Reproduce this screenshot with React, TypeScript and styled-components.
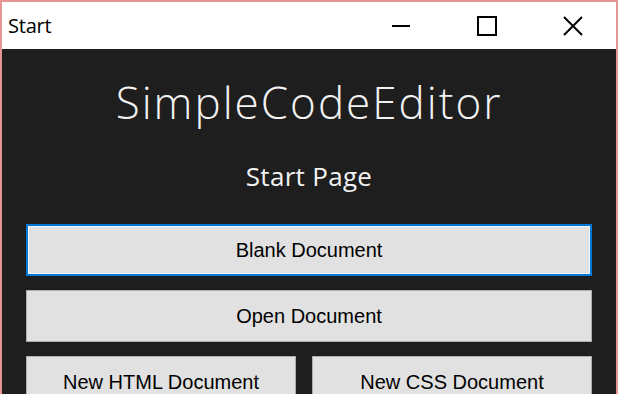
import styled, { createGlobalStyle, css } from "styled-components";

const GlobalStyle = createGlobalStyle`
  html, body {
    margin: 0;
    padding: 0;
    background: #1e1e1e;
  }
`;

const App = () => {
  return (
    <>
      <GlobalStyle />
      <Window>
        <TitleBar>
          <Caption>Start</Caption>
          <Controls>
            <CaptionButton aria-label="Minimize">
              <svg width="22" height="22" viewBox="0 0 22 22">
                <line x1="2" y1="11" x2="20" y2="11" stroke="#000" strokeWidth="2" />
              </svg>
            </CaptionButton>
            <CaptionButton aria-label="Maximize">
              <svg width="22" height="22" viewBox="0 0 22 22">
                <rect x="2" y="2" width="18" height="18" fill="none" stroke="#000" strokeWidth="2" />
              </svg>
            </CaptionButton>
            <CaptionButton aria-label="Close">
              <svg width="22" height="22" viewBox="0 0 22 22">
                <path d="M2 2 L20 20 M20 2 L2 20" stroke="#000" strokeWidth="2" />
              </svg>
            </CaptionButton>
          </Controls>
        </TitleBar>
        <Content>
          <AppName>SimpleCodeEditor</AppName>
          <Subtitle>Start Page</Subtitle>
          <ButtonStack>
            <ActionButton $focused>Blank Document</ActionButton>
            <ActionButton>Open Document</ActionButton>
            <ButtonRow>
              <ActionButton>New HTML Document</ActionButton>
              <ActionButton>New CSS Document</ActionButton>
            </ButtonRow>
          </ButtonStack>
        </Content>
      </Window>
    </>
  );
};

export default App;

const Window = styled.div`
  height: 100vh;
  box-sizing: border-box;
  border: 2px solid #e79494;
  border-bottom: none;
  display: flex;
  flex-direction: column;
  overflow: hidden;
`;

const TitleBar = styled.div`
  height: 47px;
  flex-shrink: 0;
  background: #ffffff;
  display: flex;
  align-items: center;
  justify-content: space-between;
`;

const Caption = styled.div`
  padding-left: 6px;
  font-family: "Open Sans", "Noto Sans", sans-serif;
  font-size: 20px;
  color: #000;
  letter-spacing: -0.2px;
`;

const Controls = styled.div`
  display: flex;
  height: 100%;
`;

const CaptionButton = styled.button`
  width: 86px;
  height: 100%;
  border: none;
  background: transparent;
  padding: 0;
  display: flex;
  align-items: center;
  justify-content: center;
`;

const Content = styled.div`
  flex: 1;
  background: #1e1e1e;
  padding: 28px 24px 0;
  display: flex;
  flex-direction: column;
  align-items: center;
`;

const AppName = styled.h1`
  margin: 0;
  font-family: "Open Sans", "Noto Sans", sans-serif;
  font-weight: 300;
  font-size: 44px;
  line-height: 50px;
  letter-spacing: 2px;
  color: #f2f2f2;
`;

const Subtitle = styled.h2`
  margin: 34px 0 0;
  font-family: "Open Sans", "Noto Sans", sans-serif;
  font-weight: 400;
  font-size: 26px;
  line-height: 30px;
  letter-spacing: 0.3px;
  color: #f2f2f2;
`;

const ButtonStack = styled.div`
  margin-top: 33px;
  width: 100%;
  display: flex;
  flex-direction: column;
  gap: 14px;
`;

const ButtonRow = styled.div`
  display: grid;
  grid-template-columns: 270px 1fr;
  gap: 16px;
`;

const ActionButton = styled.button<{ $focused?: boolean }>`
  height: 52px;
  box-sizing: border-box;
  background: #e1e1e1;
  border: 1px solid #adadad;
  font-family: "Liberation Sans", Arial, sans-serif;
  font-size: 20px;
  color: #000;
  padding: 0;
  ${(p) =>
    p.$focused &&
    css`
      border: 2px solid #0078d7;
      box-shadow: inset 0 0 0 1px #f4f4f4;
    `}
`;
